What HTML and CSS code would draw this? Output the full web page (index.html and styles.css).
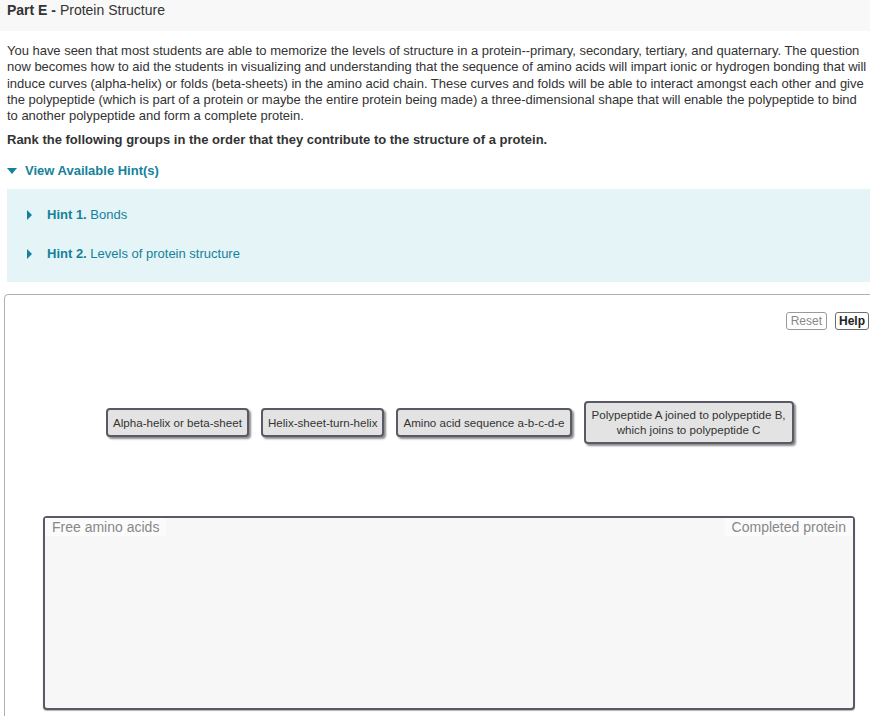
FILE: index.html
```html
<!DOCTYPE html>
<html lang="en">
<head>
  <meta charset="UTF-8">
  <meta name="viewport" content="width=device-width, initial-scale=1.0">
  <title>Part E - Protein Structure</title>
  <link rel="stylesheet" href="styles.css">
</head>
<body>
  <header class="part-head">
    <strong>Part E -</strong> Protein Structure
  </header>

  <section class="problem">
    <p class="intro">You have seen that most students are able to memorize the levels of structure in a protein--primary, secondary, tertiary, and quaternary. The question now becomes how to aid the students in visualizing and understanding that the sequence of amino acids will impart ionic or hydrogen bonding that will induce curves (alpha-helix) or folds (beta-sheets) in the amino acid chain. These curves and folds will be able to interact amongst each other and give the polypeptide (which is part of a protein or maybe the entire protein being made) a three-dimensional shape that will enable the polypeptide to bind to another polypeptide and form a complete protein.</p>
    <p class="task">Rank the following groups in the order that they contribute to the structure of a protein.</p>

    <div class="hints-toggle"><span class="tri-down"></span>View Available Hint(s)</div>
    <div class="hints">
      <div class="hint"><span class="tri-right"></span><b>Hint 1.</b> Bonds</div>
      <div class="hint"><span class="tri-right"></span><b>Hint 2.</b> Levels of protein structure</div>
    </div>
  </section>

  <section class="ranking">
    <div class="tools">
      <button class="btn btn-off">Reset</button>
      <button class="btn btn-help">Help</button>
    </div>

    <div class="pool">
      <div class="tile">Alpha-helix or beta-sheet</div>
      <div class="tile">Helix-sheet-turn-helix</div>
      <div class="tile">Amino acid sequence a-b-c-d-e</div>
      <div class="tile tile-wide">Polypeptide A joined to polypeptide B,<br>which joins to polypeptide C</div>
    </div>

    <div class="target">
      <span class="label">Free amino acids</span>
      <span class="label">Completed protein</span>
    </div>
  </section>
</body>
</html>
```

FILE: styles.css
```css
body {
  margin: 0;
  font-family: "Liberation Sans", Arial, sans-serif;
  color: #333;
  overflow: hidden;
}

.part-head {
  background-color: #f8f8f8;
  height: 31px;
  padding: 2px 7px 0;
  box-sizing: border-box;
  font-size: 14px;
  line-height: 16px;
}

.problem {
  padding: 0 0 0 7px;
}

.intro {
  margin: 12px 0 0 0;
  font-size: 13px;
  line-height: 16.3px;
  letter-spacing: -0.02px;
}

.task {
  margin: 8px 0 0;
  font-size: 13px;
  line-height: 16px;
  font-weight: bold;
}

.hints-toggle {
  margin-top: 15px;
  color: #15819b;
  font-weight: bold;
  font-size: 13px;
  line-height: 16px;
}

.tri-down {
  display: inline-block;
  width: 0;
  height: 0;
  border-left: 5px solid transparent;
  border-right: 5px solid transparent;
  border-top: 6px solid #15819b;
  margin: 0 8px 1px 0;
}

.hints {
  margin-top: 10px;
  background-color: #e5f5f7;
  padding: 18px 0 20px 20px;
  color: #15819b;
  font-size: 13px;
}

.hint {
  line-height: 16px;
}

.hint + .hint {
  margin-top: 23px;
}

.tri-right {
  display: inline-block;
  width: 0;
  height: 0;
  border-top: 5px solid transparent;
  border-bottom: 5px solid transparent;
  border-left: 5px solid #15819b;
  margin: 0 15px -1px 0;
}

.ranking {
  margin: 12px -20px 0 4px;
  border: 1px solid #b0b0b0;
  border-radius: 4px;
  height: 440px;
}

.tools {
  display: flex;
  justify-content: flex-end;
  gap: 8px;
  padding: 17px 20px 0 0;
}

.btn {
  font-family: inherit;
  font-size: 12px;
  background: #fff;
  border: 1px solid #6c6c6c;
  border-radius: 3px;
  padding: 0 4px;
  height: 18px;
  color: #222;
}

.btn-off {
  color: #888;
  border-color: #9a9a9a;
}

.btn-help {
  font-weight: bold;
  padding: 0 3px;
}

.pool {
  display: flex;
  align-items: center;
  gap: 12px;
  padding: 71px 0 0 101px;
}

.tile {
  background-color: #e3e3e3;
  border: 2px solid #5a5a66;
  border-radius: 4px;
  box-shadow: 2px 2px 2px rgba(0, 0, 0, 0.45);
  font-size: 11.6px;
  line-height: 15px;
  padding: 5px 5px;
  text-align: center;
}

.tile-wide {
  padding: 4px 6px 5px;
}

.target {
  display: flex;
  justify-content: space-between;
  box-sizing: border-box;
  width: 812px;
  height: 194px;
  margin: 72px 0 0 38px;
  background-color: #f7f7f7;
  border: 2px solid #5a5a66;
  border-radius: 4px;
  box-shadow: 0 1px 1px rgba(0, 0, 0, 0.3);
}

.label {
  align-self: flex-start;
  background-color: #fbfbfb;
  color: #888;
  font-size: 14px;
  line-height: 18px;
  padding: 0 7px;
}
```
